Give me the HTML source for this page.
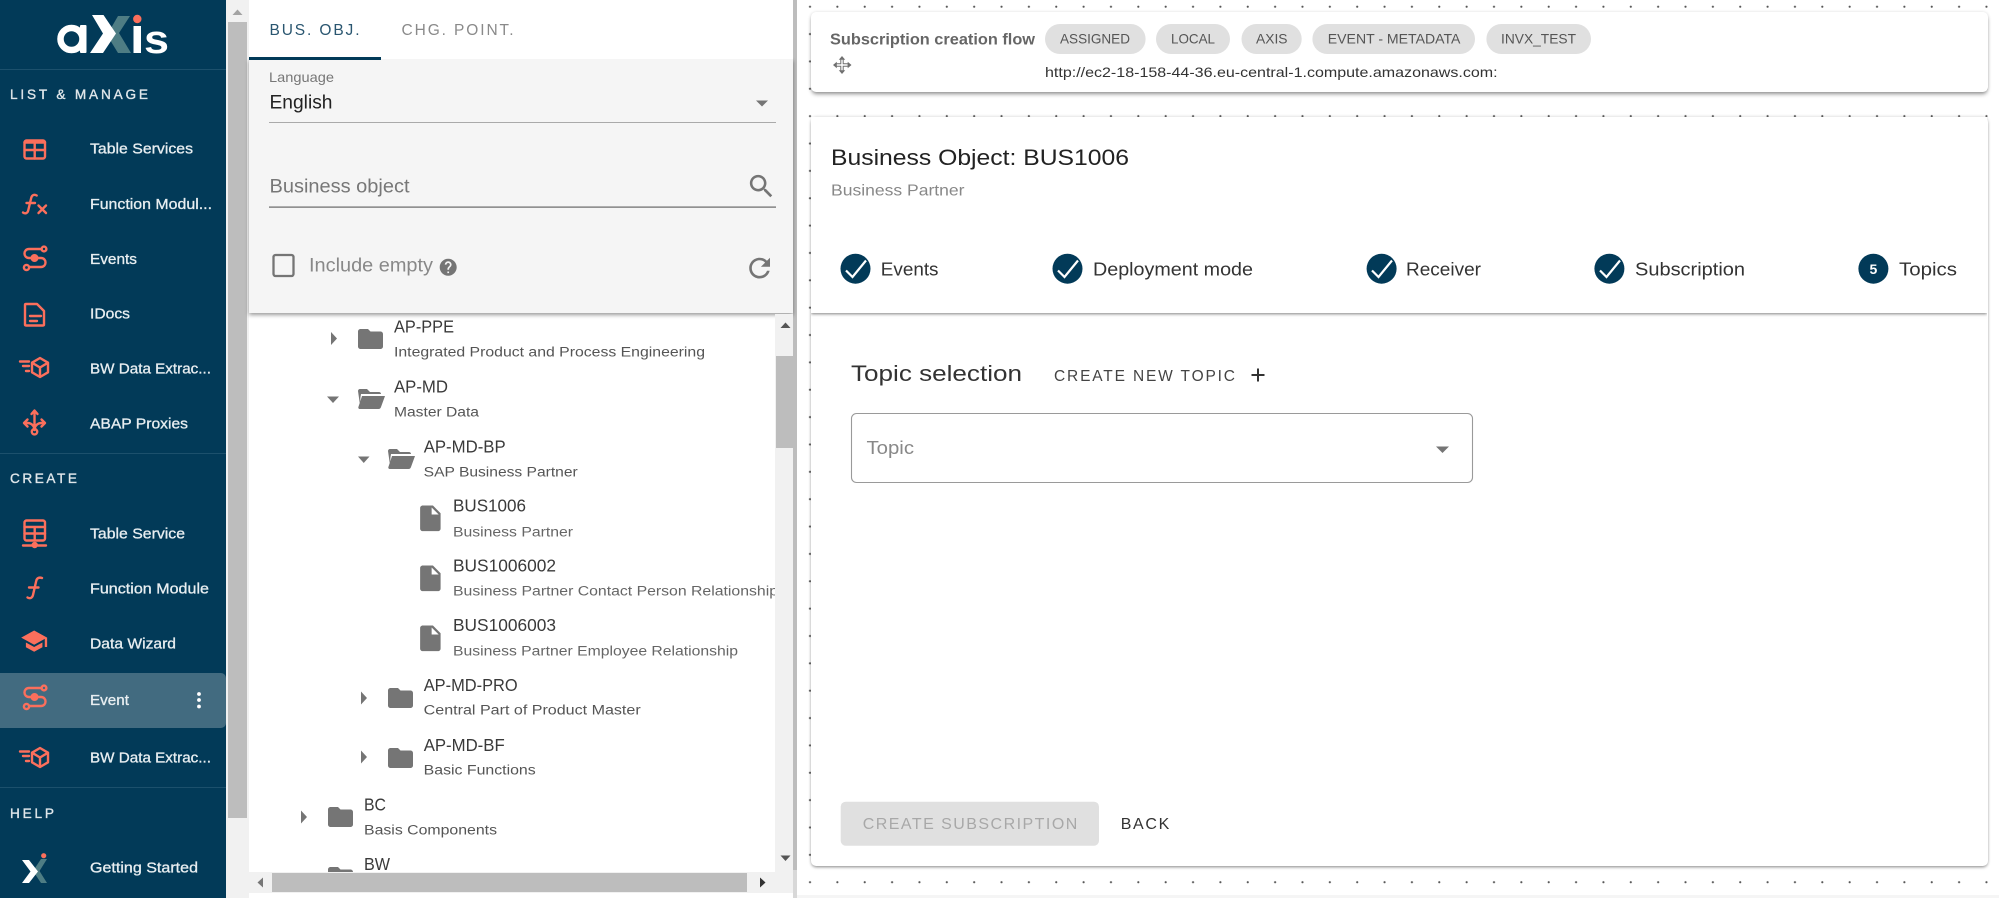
<!DOCTYPE html>
<html><head><meta charset="utf-8"><title>Subscription creation flow</title>
<style>
html,body{margin:0;padding:0;width:1999px;height:898px;overflow:hidden;background:#fff}
.b{position:absolute}
svg{position:absolute;left:0;top:0;filter:blur(.3px)}
text{font-family:"Liberation Sans",sans-serif}
.n{font-size:14.8px;fill:#e8eef1;stroke:#e8eef1;stroke-width:.3px}
.h{font-size:13.6px;fill:#dfe6ea;stroke:#dfe6ea;stroke-width:.35px}
.t{font-size:17.2px;fill:#3a3a3a}
.s{font-size:14.2px;fill:#555}
.c{font-size:14px;fill:#555}
.st{font-size:18.6px;fill:#333}
.ic{fill:none;stroke:#fb6f5c;stroke-width:2.4;stroke-linecap:round;stroke-linejoin:round}
.if{fill:#fb6f5c}
.g{fill:#757575}
</style></head><body>
<div class="b" style="left:0;top:0;width:226px;height:898px;background:#023a58"></div>
<div class="b" style="left:0;top:673px;width:226px;height:55px;background:#426b80;border-radius:0 5px 5px 0"></div>
<div class="b" style="left:0;top:69px;width:226px;height:1px;background:#1c506c"></div>
<div class="b" style="left:0;top:453px;width:226px;height:1px;background:#1c506c"></div>
<div class="b" style="left:0;top:787px;width:226px;height:1px;background:#1c506c"></div>
<div class="b" style="left:226px;top:0;width:23px;height:898px;background:#f1f1f1"></div>
<div class="b" style="left:228px;top:22px;width:19px;height:796px;background:#bdbdbd"></div>
<div class="b" style="left:797px;top:0;width:1202px;height:895px;background-color:#fff;background-image:radial-gradient(circle at center,#555 .8px,rgba(0,0,0,0) 1.3px);background-size:27.36px 27.36px;background-position:-.68px -6.98px"></div>
<div class="b" style="left:797px;top:895px;width:1202px;height:3px;background:#f5f5f5"></div>
<div class="b" style="left:793px;top:0;width:4px;height:870px;background:#bdbdbd"></div>
<div class="b" style="left:793px;top:870px;width:4px;height:28px;background:#d8d8d8"></div>
<div class="b" style="left:811px;top:12px;width:1177px;height:80px;background:#fff;border-radius:5px;box-shadow:0 3px 4px -1px rgba(0,0,0,.42),0 0 3px rgba(0,0,0,.12)"></div>
<div class="b" style="left:811px;top:117px;width:1177px;height:749px;background:#fff;border-radius:5px;box-shadow:0 2px 3px -1px rgba(0,0,0,.4),0 0 3px rgba(0,0,0,.2)"></div>
<div class="b" style="left:811px;top:117px;width:1176px;height:196px;background:#fff;box-shadow:0 1px 3px rgba(0,0,0,.5);clip-path:inset(0 0 -6px 0)"></div>
<div class="b" style="left:249px;top:59px;width:544px;height:254px;background:#f5f5f5;box-shadow:0 2px 4px rgba(0,0,0,.4)"></div>
<div class="b" style="left:249px;top:0;width:544px;height:59px;background:#fff"></div>
<div class="b" style="left:249px;top:57px;width:132px;height:2.5px;background:#023a58"></div>

<svg width="1999" height="898" viewBox="0 0 1999 898" xmlns="http://www.w3.org/2000/svg">
<!-- logo -->
<circle cx="71.5" cy="39" r="11" fill="none" stroke="#fff" stroke-width="6.5"/>
<rect x="80" y="25" width="6.5" height="28" rx="1" fill="#fff"/>
<path d="M118 16h12l-11 17 12 20h-13l-11-18z" fill="#4e7d84"/>
<path d="M92 15h11.500L116 33.500 103 53H90l13-19.500z" fill="#fff"/>
<rect x="133.500" y="26" width="7.500" height="27" fill="#fff"/>
<circle cx="137.300" cy="19" r="4.200" fill="#fb6f5c"/>
<text x="144" y="53" font-size="40" font-weight="700" fill="#fff" textLength="25" lengthAdjust="spacingAndGlyphs">s</text>

<!-- sidebar text -->
<text class="h" x="10" y="99" textLength="138" lengthAdjust="spacing">LIST &amp; MANAGE</text>
<text class="n" x="90" y="153.500" textLength="103" lengthAdjust="spacingAndGlyphs">Table Services</text>
<text class="n" x="90" y="209" textLength="122" lengthAdjust="spacingAndGlyphs">Function Modul...</text>
<text class="n" x="90" y="264" textLength="47" lengthAdjust="spacingAndGlyphs">Events</text>
<text class="n" x="90" y="318.500" textLength="40" lengthAdjust="spacingAndGlyphs">IDocs</text>
<text class="n" x="90" y="373.500" textLength="121" lengthAdjust="spacingAndGlyphs">BW Data Extrac...</text>
<text class="n" x="90" y="428.500" textLength="98" lengthAdjust="spacingAndGlyphs">ABAP Proxies</text>
<text class="h" x="10" y="483" textLength="67" lengthAdjust="spacing">CREATE</text>
<text class="n" x="90" y="538.500" textLength="95" lengthAdjust="spacingAndGlyphs">Table Service</text>
<text class="n" x="90" y="593.500" textLength="119" lengthAdjust="spacingAndGlyphs">Function Module</text>
<text class="n" x="90" y="648.500" textLength="86" lengthAdjust="spacingAndGlyphs">Data Wizard</text>
<text class="n" x="90" y="705" textLength="39" lengthAdjust="spacingAndGlyphs">Event</text>
<text class="n" x="90" y="762.500" textLength="121" lengthAdjust="spacingAndGlyphs">BW Data Extrac...</text>
<text class="h" x="10" y="818" textLength="44" lengthAdjust="spacing">HELP</text>
<text class="n" x="90" y="872.500" textLength="108" lengthAdjust="spacingAndGlyphs">Getting Started</text>
<circle cx="199" cy="694" r="1.900" fill="#fff"/><circle cx="199" cy="700" r="1.900" fill="#fff"/><circle cx="199" cy="706.500" r="1.900" fill="#fff"/>

<!-- sidebar icons -->
<g class="ic" stroke-width="2.600"><rect x="24.500" y="140.500" width="20.500" height="18" rx="2"/><path d="M24.500 150h20.500M34.700 141v17.500M24.500 142.500h20.500"/></g>
<g class="ic" stroke-width="2.200"><path d="M23 212.500c2 1.500 4.500 1 5.200-2l3-12.500c.7-3 3-4 5.500-2.500"/><path d="M26.500 203h8.500"/></g>
<path d="M38.500 205.500l7.500 7.500M46 205.500l-7.500 7.500" class="ic" stroke-width="2.700"/>
<g class="ic" stroke-width="2"><path d="M41 249H29c-6 0-6 9 0 9h12c6 0 6 9 0 9H30"/><circle cx="44" cy="249" r="2.400"/><circle cx="26.500" cy="267.500" r="2.600"/><circle cx="34.500" cy="258" r="2.800" class="if"/></g>
<g class="ic" stroke-width="2"><path d="M26 304h11l7 7v13.500c0 .6-.4 1-1 1H26c-.6 0-1-.4-1-1V305c0-.6.4-1 1-1z"/><path d="M30 316h11M30 321h7"/></g>
<g class="ic" stroke-width="2"><path d="M20 361.500h9M23 366h6M26 371h3"/><path d="M40 358l8 4.700v9.600l-8 4.700-8-4.700v-9.600zM32 362.700l8 4.800 8-4.800M40 367.500v9.500"/></g>
<g class="ic" stroke-width="2"><path d="M34.500 411v18M31.500 414l3-3.500 3 3.500M24.500 423h3c4 0 7 3 7 7M44.500 423h-3c-4 0-7 3-7 7"/><path d="M27.500 419.500l-3.500 3.500 3.500 3.500M41.500 419.500l3.500 3.500-3.500 3.500"/><circle cx="34.500" cy="431.700" r="2.700"/></g>
<g class="ic" stroke-width="2.300"><rect x="24.500" y="520.500" width="20.500" height="20" rx="2"/><path d="M24.500 527h20.500M24.500 533.500h20.500M34.700 527v13.500M23 545.500h23"/></g><circle cx="34.700" cy="545" r="3.200" class="if"/>
<g class="ic" stroke-width="2.300"><path d="M27.500 597.500c2.500 1.500 4.800.5 5.500-2.500l3.200-14c.6-3 3-4 5.800-3M29 587.500h9.500"/></g>
<g transform="translate(20,627) scale(1.18)"><path class="if" d="M5 13.180v4L12 21l7-3.820v-4L12 17l-7-3.820zM12 3L1 9l11 6 9-4.910V17h2V9L12 3z"/></g>
<g class="ic" stroke-width="2"><path d="M41 688H29c-6 0-6 9 0 9h12c6 0 6 9 0 9H30"/><circle cx="44" cy="688" r="2.400"/><circle cx="26.500" cy="706.500" r="2.600"/><circle cx="34.500" cy="697" r="2.800" class="if"/></g>
<g class="ic" stroke-width="2"><path d="M20 751.500h9M23 756h6M26 761h3"/><path d="M40 748l8 4.700v9.600l-8 4.700-8-4.700v-9.600zM32 752.700l8 4.800 8-4.800M40 757.500v9.500"/></g>
<path d="M47 859h-6l-8 12 8 12h6l-7.500-12z" fill="#4e7d84"/>
<path d="M22 860h7l9 11.500-9 11.500h-7l8.500-11.500z" fill="#fff"/>
<circle cx="43.700" cy="855.700" r="2.600" fill="#fb6f5c"/>

<!-- tabs & filter panel -->
<text x="269.500" y="35" font-size="15.500" fill="#2a5670" textLength="90" lengthAdjust="spacing">BUS. OBJ.</text>
<text x="401.500" y="35" font-size="15.500" fill="#8a8a8a" textLength="112" lengthAdjust="spacing">CHG. POINT.</text>
<text x="269" y="82" font-size="14" fill="#777" textLength="65" lengthAdjust="spacingAndGlyphs">Language</text>
<text x="269.500" y="108.500" font-size="19.500" fill="#222" textLength="63" lengthAdjust="spacingAndGlyphs">English</text>
<path d="M756 100.500h12l-6 6z" class="g"/>
<rect x="269" y="122" width="507" height="1" fill="#aaa"/>
<text x="269.500" y="192.500" font-size="19" fill="#777" textLength="140" lengthAdjust="spacingAndGlyphs">Business object</text>
<g transform="translate(746,171) scale(1.280)"><path class="g" d="M15.500 14h-.79l-.28-.27C15.410 12.590 16 11.110 16 9.500 16 5.910 13.090 3 9.500 3S3 5.910 3 9.500 5.910 16 9.500 16c1.610 0 3.090-.59 4.230-1.570l.27.28v.79l5 4.990L20.490 19l-4.990-5zm-6 0C7.010 14 5 11.990 5 9.500S7.010 5 9.500 5 14 7.010 14 9.500 11.990 14 9.500 14z"/></g>
<rect x="269" y="206.500" width="507" height="1.200" fill="#666"/>
<rect x="273.500" y="255" width="20" height="21" rx="2" fill="none" stroke="#757575" stroke-width="2.300"/>
<text x="309" y="271.500" font-size="19" fill="#888" textLength="124" lengthAdjust="spacingAndGlyphs">Include empty</text>
<g transform="translate(438,257) scale(.85)"><path class="g" d="M12 2C6.480 2 2 6.480 2 12s4.480 10 10 10 10-4.480 10-10S17.520 2 12 2zm1 17h-2v-2h2v2zm2.070-7.750l-.9.92C13.450 12.900 13 13.500 13 15h-2v-.5c0-1.100.45-2.100 1.170-2.830l1.240-1.260c.37-.36.59-.86.59-1.410 0-1.100-.9-2-2-2s-2 .9-2 2H8c0-2.210 1.790-4 4-4s4 1.790 4 4c0 .88-.36 1.680-.93 2.250z"/></g>
<g transform="translate(744,252.500) scale(1.300)"><path class="g" d="M17.650 6.350C16.200 4.900 14.210 4 12 4c-4.420 0-7.990 3.580-7.990 8s3.570 8 7.990 8c3.730 0 6.840-2.550 7.730-6h-2.080c-.82 2.330-3.040 4-5.650 4-3.310 0-6-2.690-6-6s2.690-6 6-6c1.660 0 3.140.69 4.220 1.780L13 11h7V4l-2.350 2.350z"/></g>

<!-- tree -->
<path class="g" d="M331 332l6 6.500-6 6.500z"/>
<g transform="translate(355.500,324) scale(1.250)"><path class="g" d="M10 4H4c-1.100 0-1.990.9-1.990 2L2 18c0 1.100.9 2 2 2h16c1.100 0 2-.9 2-2V8c0-1.100-.9-2-2-2h-8l-2-2z"/></g>
<text class="t" x="394" y="332.500" textLength="60" lengthAdjust="spacingAndGlyphs">AP-PPE</text>
<text class="s" x="394" y="356.500" textLength="311" lengthAdjust="spacingAndGlyphs">Integrated Product and Process Engineering</text>

<path class="g" d="M327 396.500h12l-6 6.500z"/>
<path class="g" d="M358 391c0-1 .8-2 2-2h7l3 3h9c1 0 2 .8 2 2H361l-.5 3-.5 8zM362 396h23l-4 11c-.3 1-1 2-2.500 2H360c-1.300 0-2-1-1.600-2z"/>
<text class="t" x="394" y="392.500" textLength="54" lengthAdjust="spacingAndGlyphs">AP-MD</text>
<text class="s" x="394" y="416.500" textLength="85" lengthAdjust="spacingAndGlyphs">Master Data</text>

<path class="g" d="M358 456.500h11.500l-5.750 6.500z"/>
<path class="g" d="M388 451c0-1 .8-2 2-2h7l3 3h9c1 0 2 .8 2 2H391l-.5 3-.5 8zM392 456h23l-4 11c-.3 1-1 2-2.500 2H390c-1.300 0-2-1-1.600-2z"/>
<text class="t" x="423.700" y="452.500" textLength="82" lengthAdjust="spacingAndGlyphs">AP-MD-BP</text>
<text class="s" x="423.700" y="476.500" textLength="154" lengthAdjust="spacingAndGlyphs">SAP Business Partner</text>

<g transform="translate(415,503) scale(1.280)"><path class="g" d="M6 2c-1.100 0-1.990.9-1.990 2L4 20c0 1.100.89 2 1.990 2H18c1.100 0 2-.9 2-2V8l-6-6H6zm7 7V3.500L18.500 9H13z"/></g>
<text class="t" x="453" y="511.500" textLength="73" lengthAdjust="spacingAndGlyphs">BUS1006</text>
<text class="s" x="453" y="536.500" textLength="120" lengthAdjust="spacingAndGlyphs" style="fill:#666">Business Partner</text>

<g transform="translate(415,563) scale(1.280)"><path class="g" d="M6 2c-1.100 0-1.990.9-1.990 2L4 20c0 1.100.89 2 1.990 2H18c1.100 0 2-.9 2-2V8l-6-6H6zm7 7V3.500L18.500 9H13z"/></g>
<text class="t" x="453" y="571.500" textLength="103" lengthAdjust="spacingAndGlyphs">BUS1006002</text>
<text class="s" x="453" y="595.500" textLength="325" lengthAdjust="spacingAndGlyphs" style="fill:#666">Business Partner Contact Person Relationship</text>

<g transform="translate(415,623) scale(1.280)"><path class="g" d="M6 2c-1.100 0-1.990.9-1.990 2L4 20c0 1.100.89 2 1.990 2H18c1.100 0 2-.9 2-2V8l-6-6H6zm7 7V3.500L18.500 9H13z"/></g>
<text class="t" x="453" y="631" textLength="103" lengthAdjust="spacingAndGlyphs">BUS1006003</text>
<text class="s" x="453" y="655.500" textLength="285" lengthAdjust="spacingAndGlyphs" style="fill:#666">Business Partner Employee Relationship</text>

<path class="g" d="M361 691.500l6 6.500-6 6.500z"/>
<g transform="translate(385.500,683) scale(1.250)"><path class="g" d="M10 4H4c-1.100 0-1.990.9-1.990 2L2 18c0 1.100.9 2 2 2h16c1.100 0 2-.9 2-2V8c0-1.100-.9-2-2-2h-8l-2-2z"/></g>
<text class="t" x="423.700" y="691" textLength="94" lengthAdjust="spacingAndGlyphs">AP-MD-PRO</text>
<text class="s" x="423.700" y="714.500" textLength="217" lengthAdjust="spacingAndGlyphs">Central Part of Product Master</text>

<path class="g" d="M361 750.500l6 6.500-6 6.500z"/>
<g transform="translate(385.500,743) scale(1.250)"><path class="g" d="M10 4H4c-1.100 0-1.990.9-1.990 2L2 18c0 1.100.9 2 2 2h16c1.100 0 2-.9 2-2V8c0-1.100-.9-2-2-2h-8l-2-2z"/></g>
<text class="t" x="423.700" y="751" textLength="81" lengthAdjust="spacingAndGlyphs">AP-MD-BF</text>
<text class="s" x="423.700" y="774.500" textLength="112" lengthAdjust="spacingAndGlyphs">Basic Functions</text>

<path class="g" d="M301 810.500l6 6.500-6 6.500z"/>
<g transform="translate(325.500,802) scale(1.250)"><path class="g" d="M10 4H4c-1.100 0-1.990.9-1.990 2L2 18c0 1.100.9 2 2 2h16c1.100 0 2-.9 2-2V8c0-1.100-.9-2-2-2h-8l-2-2z"/></g>
<text class="t" x="364" y="810.500" textLength="22" lengthAdjust="spacingAndGlyphs">BC</text>
<text class="s" x="364" y="834.500" textLength="133" lengthAdjust="spacingAndGlyphs">Basis Components</text>

<g transform="translate(325.500,862) scale(1.250)"><path class="g" d="M10 4H4c-1.100 0-1.990.9-1.990 2L2 18c0 1.100.9 2 2 2h16c1.100 0 2-.9 2-2V8c0-1.100-.9-2-2-2h-8l-2-2z"/></g>
<text class="t" x="364" y="870" textLength="26" lengthAdjust="spacingAndGlyphs">BW</text>

<!-- tree scrollbars -->
<rect x="775" y="314" width="18" height="558" fill="#f1f1f1"/>
<rect x="776" y="356" width="17" height="92" fill="#bdbdbd"/>
<path d="M780.500 328l5-5.500 5 5.500z" fill="#555"/>
<path d="M780.500 855.500l5 5.500 5-5.500z" fill="#555"/>
<rect x="249" y="872" width="544" height="21" fill="#f1f1f1"/>
<rect x="272" y="873" width="475" height="19" fill="#bdbdbd"/>
<path d="M263 877.500l-5.500 5 5.500 5z" fill="#777"/>
<path d="M760 877.500l5.500 5-5.500 5z" fill="#333"/>
<rect x="249" y="893" width="544" height="5" fill="#fff"/>
<path d="M232.500 15l5-5.500 5 5.500z" fill="#a3a3a3"/>

<!-- card 1 -->
<text x="830" y="44.500" font-size="15.500" font-weight="700" fill="#666" textLength="205" lengthAdjust="spacingAndGlyphs">Subscription creation flow</text>
<g fill="#707070"><path d="M842 56l3.200 3.800h-6.400zM842 74l3.200-3.800h-6.400zM833 65l3.800-3.200v6.400zM851.500 65l-3.800-3.200v6.400z"/></g>
<path d="M840.800 59h2.400v4.800h5v2.400h-5v5h-2.400v-5h-4.800v-2.400h4.800z" fill="none" stroke="#707070" stroke-width="1"/>
<g fill="#e0e0e0"><rect x="1045" y="24" width="100.600" height="30" rx="15"/><rect x="1156" y="24" width="74" height="30" rx="15"/><rect x="1241.500" y="24" width="60.200" height="30" rx="15"/><rect x="1312.400" y="24" width="162.600" height="30" rx="15"/><rect x="1486.400" y="24" width="104.600" height="30" rx="15"/></g>
<text class="c" x="1060" y="43.500" textLength="70" lengthAdjust="spacingAndGlyphs">ASSIGNED</text>
<text class="c" x="1171" y="43.500" textLength="44" lengthAdjust="spacingAndGlyphs">LOCAL</text>
<text class="c" x="1256" y="43.500" textLength="31.500" lengthAdjust="spacingAndGlyphs">AXIS</text>
<text class="c" x="1327.800" y="43.500" textLength="132.600" lengthAdjust="spacingAndGlyphs">EVENT - METADATA</text>
<text class="c" x="1501" y="43.500" textLength="75" lengthAdjust="spacingAndGlyphs">INVX_TEST</text>
<text x="1045" y="77" font-size="14" fill="#333" textLength="452.600" lengthAdjust="spacingAndGlyphs">http://ec2-18-158-44-36.eu-central-1.compute.amazonaws.com:</text>

<!-- card 2 -->
<text x="831" y="165" font-size="22.500" fill="#222" textLength="298" lengthAdjust="spacingAndGlyphs">Business Object: BUS1006</text>
<text x="831" y="195.500" font-size="16" fill="#888" textLength="133.500" lengthAdjust="spacingAndGlyphs">Business Partner</text>
<g fill="#023a58"><circle cx="855.500" cy="268.700" r="15"/><circle cx="1067.500" cy="268.700" r="15"/><circle cx="1381.600" cy="268.700" r="15"/><circle cx="1609.400" cy="268.700" r="15"/><circle cx="1873.400" cy="268.700" r="15"/></g>
<g fill="none" stroke="#fff" stroke-width="2.200"><path d="M846 270.500l6.500 6.500L866 260.500"/><path d="M1058 270.500l6.500 6.500L1078 260.500"/><path d="M1372 270.500l6.500 6.500L1392 260.500"/><path d="M1600 270.500l6.500 6.500L1620 260.500"/></g>
<text x="1873.400" y="274" font-size="14" font-weight="700" fill="#fff" text-anchor="middle">5</text>
<text class="st" x="880.800" y="275.500" textLength="57.700" lengthAdjust="spacingAndGlyphs">Events</text>
<text class="st" x="1093" y="275.500" textLength="160" lengthAdjust="spacingAndGlyphs">Deployment mode</text>
<text class="st" x="1406" y="275.500" textLength="75" lengthAdjust="spacingAndGlyphs">Receiver</text>
<text class="st" x="1635" y="275.500" textLength="110" lengthAdjust="spacingAndGlyphs">Subscription</text>
<text class="st" x="1899" y="275.500" textLength="58" lengthAdjust="spacingAndGlyphs">Topics</text>

<text x="851" y="381" font-size="22.500" fill="#333" textLength="171" lengthAdjust="spacingAndGlyphs">Topic selection</text>
<text x="1054" y="381" font-size="15.500" fill="#444" textLength="181" lengthAdjust="spacing">CREATE NEW TOPIC</text>
<path d="M1258 368.500v13M1251.500 375h13" stroke="#333" stroke-width="2" fill="none"/>
<rect x="851.500" y="413.500" width="621" height="69" rx="5" fill="#fff" stroke="#9a9a9a" stroke-width="1.100"/>
<text x="866.500" y="454" font-size="18" fill="#888" textLength="47.500" lengthAdjust="spacingAndGlyphs">Topic</text>
<path d="M1436 446.500h13l-6.500 6.500z" class="g"/>
<rect x="840.700" y="801.700" width="258.300" height="44" rx="5" fill="#e0e0e0"/>
<text x="862.700" y="829" font-size="16" fill="#a8a8a8" textLength="214.600" lengthAdjust="spacing">CREATE SUBSCRIPTION</text>
<text x="1120.700" y="829" font-size="16" fill="#333" textLength="48.600" lengthAdjust="spacing">BACK</text>
</svg>
</body></html>
